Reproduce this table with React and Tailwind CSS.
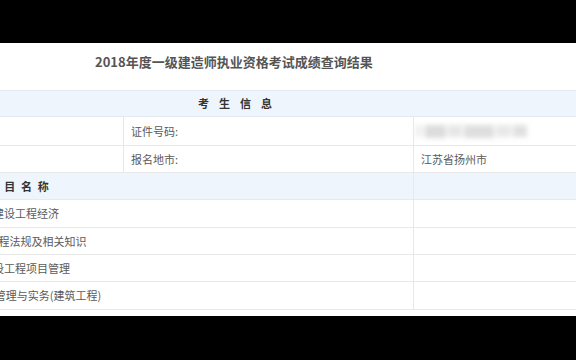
export default function App() {
  const subjects = [
    "建设工程经济",
    "建设工程法规及相关知识",
    "建设工程项目管理",
    "专业工程管理与实务(建筑工程)",
  ];
  const heights = ["h-[28px]", "h-[27px]", "h-[27px]", "h-[28px]"];

  return (
    <div
      className="flex h-[360px] w-[576px] flex-col bg-black"
      style={{ fontFamily: '"Noto Sans CJK SC", "Noto Sans", sans-serif' }}
    >
      <div className="h-[43px] shrink-0" />
      <div className="h-[273px] shrink-0 overflow-hidden bg-white">
        <div className="h-[47px] pl-[95px] pt-[11px] text-[13px] font-bold leading-[16px] text-[#555]">
          2018年度一级建造师执业资格考试成绩查询结果
        </div>

        <div className="border-t border-[#e6ebf0]">
          {/* 考生信息 */}
          <div className="flex h-[26px] items-center border-b border-[#e4eaf0] bg-[#eef5fd] pl-[198px] text-[11px] font-bold tracking-[10px] text-[#333]">
            考生信息
          </div>

          <div className="flex h-[29px] border-b border-[#e8e8e8] text-[11px] text-[#5a5a5a]">
            <div className="w-[124px] shrink-0 border-r border-[#e8e8e8]" />
            <div className="flex w-[290px] shrink-0 items-center border-r border-[#e8e8e8] pl-[7px]">证件号码:</div>
            <div className="flex flex-1 items-center pl-[1px]">
              <div className="flex h-[14px] w-[112px] items-center gap-[2px] blur-[2.5px]">
                <div className="h-[12px] w-[8px] bg-[#f0f0f0]" />
                <div className="h-[13px] w-[22px] bg-[#dcdcdc]" />
                <div className="h-[12px] w-[14px] bg-[#e6e6e6]" />
                <div className="h-[13px] w-[30px] bg-[#dedede]" />
                <div className="h-[12px] w-[16px] bg-[#e8e8e8]" />
                <div className="h-[12px] w-[14px] bg-[#e0e0e0]" />
              </div>
            </div>
          </div>

          <div className="flex h-[27px] border-b border-[#e8e8e8] text-[11px] text-[#5a5a5a]">
            <div className="w-[124px] shrink-0 border-r border-[#e8e8e8]" />
            <div className="flex w-[290px] shrink-0 items-center border-r border-[#e8e8e8] pl-[7px]">报名地市:</div>
            <div className="flex flex-1 items-center pl-[7px]">江苏省扬州市</div>
          </div>

          {/* 科目名称 */}
          <div className="flex h-[27px] border-b border-[#e4eaf0] bg-[#eef5fd] text-[11px] font-bold text-[#333]">
            <div className="flex w-[414px] shrink-0 items-center border-r border-[#e4eaf0]">
              <div className="flex w-[42px] justify-center whitespace-nowrap tracking-[5.7px]">科目名称</div>
            </div>
            <div className="flex-1" />
          </div>

          {subjects.map((s, i) => (
            <div key={s} className={`flex ${heights[i]} border-b border-[#e8e8e8] text-[11px] text-[#5a5a5a]`}>
              <div className="flex w-[414px] shrink-0 items-center border-r border-[#e8e8e8]">
                <div className="flex w-[52px] justify-center whitespace-nowrap">{s}</div>
              </div>
              <div className="flex-1" />
            </div>
          ))}
        </div>
      </div>
      <div className="flex-1" />
    </div>
  );
}
